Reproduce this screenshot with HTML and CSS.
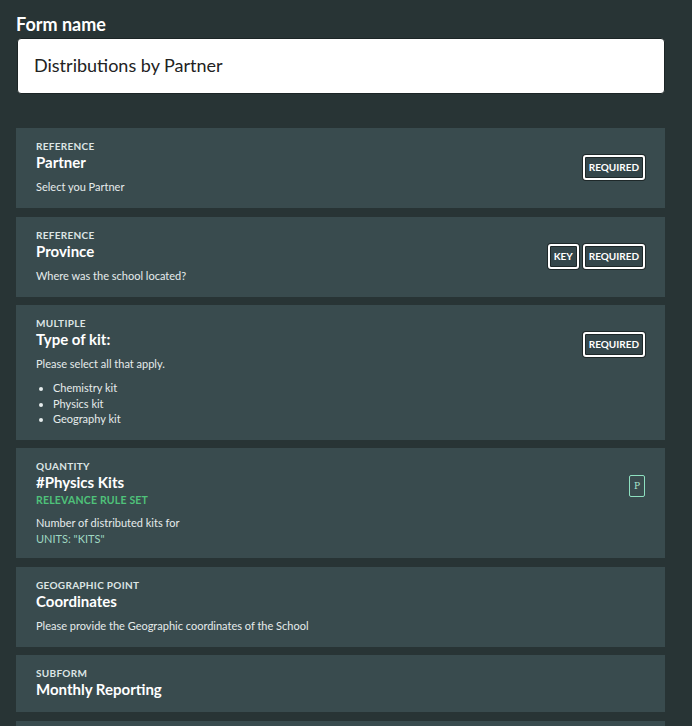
FILE: index.html
```html
<!DOCTYPE html>
<html>
<head>
<meta charset="utf-8">
<link rel="stylesheet" href="styles.css">
</head>
<body>
<div class="page">
  <h2 class="form-label">Form name</h2>
  <div class="name-input">Distributions by Partner</div>

  <div class="fields">
    <div class="card">
      <div class="card-body">
        <div class="type">REFERENCE</div>
        <div class="title">Partner</div>
        <div class="desc">Select you Partner</div>
      </div>
      <div class="badges"><span class="badge">REQUIRED</span></div>
    </div>

    <div class="card">
      <div class="card-body">
        <div class="type">REFERENCE</div>
        <div class="title">Province</div>
        <div class="desc">Where was the school located?</div>
      </div>
      <div class="badges"><span class="badge">KEY</span><span class="badge">REQUIRED</span></div>
    </div>

    <div class="card">
      <div class="card-body">
        <div class="type">MULTIPLE</div>
        <div class="title">Type of kit:</div>
        <div class="desc">Please select all that apply.</div>
        <ul class="options">
          <li>Chemistry kit</li>
          <li>Physics kit</li>
          <li>Geography kit</li>
        </ul>
      </div>
      <div class="badges"><span class="badge">REQUIRED</span></div>
    </div>

    <div class="card card-quantity">
      <div class="card-body">
        <div class="type">QUANTITY</div>
        <div class="title">#Physics Kits</div>
        <div class="relevance">RELEVANCE RULE SET</div>
        <div class="desc">Number of distributed kits for</div>
        <div class="units">UNITS: "KITS"</div>
      </div>
      <div class="badges"><span class="badge badge-p">P</span></div>
    </div>

    <div class="card">
      <div class="card-body">
        <div class="type">GEOGRAPHIC POINT</div>
        <div class="title">Coordinates</div>
        <div class="desc">Please provide the Geographic coordinates of the School</div>
      </div>
    </div>

    <div class="card">
      <div class="card-body">
        <div class="type">SUBFORM</div>
        <div class="title">Monthly Reporting</div>
      </div>
    </div>

    <div class="card card-stub"></div>
  </div>
</div>
</body>
</html>
```

FILE: styles.css
```css
html, body {
  margin: 0;
  padding: 0;
  background: #283435;
  height: 100%;
  overflow: hidden;
}
body {
  font-family: Lato, "Open Sans", sans-serif;
  color: #eef2f2;
}
.page {
  width: 649px;
  padding: 12px 0 0 16px;
}
.form-label {
  margin: 0;
  font-size: 18px;
  line-height: 24px;
  font-weight: 700;
  color: #ffffff;
}
.name-input {
  margin-top: 2px;
  margin-left: 1px;
  width: 614px;
  height: 54px;
  padding: 0 16px;
  background: #ffffff;
  border: 1px solid #1c2526;
  border-radius: 4px;
  color: #222;
  font-size: 18px;
  line-height: 53px;
}
.fields {
  margin-top: 34px;
  display: flex;
  flex-direction: column;
  gap: 8.5px;
}
.card {
  background: #394b4e;
  padding: 12px 20px 13px;
  display: flex;
  justify-content: space-between;
  align-items: flex-start;
}
.card-quantity {
  padding-bottom: 11px;
}
.card-stub {
  height: 40px;
}
.type {
  font-size: 10px;
  line-height: 12px;
  font-weight: 700;
  letter-spacing: 0.3px;
  color: #dde5e5;
}
.title {
  font-size: 15px;
  line-height: 20px;
  font-weight: 700;
  color: #ffffff;
}
.desc {
  margin-top: 7px;
  font-size: 11px;
  line-height: 16px;
  color: #e6ecec;
}
.relevance {
  font-size: 10.5px;
  line-height: 16px;
  font-weight: 700;
  letter-spacing: 0.2px;
  color: #4fc27a;
}
.units {
  font-size: 11px;
  line-height: 16px;
  color: #9fd8c2;
}
.options {
  margin: 8px 0 0;
  padding: 0 0 0 17px;
  font-size: 11px;
  line-height: 15.5px;
  color: #e6ecec;
}
.options li {
  list-style: disc;
}
.badges {
  margin-top: 15px;
  display: flex;
  gap: 4px;
}
.badge {
  display: inline-block;
  height: 21px;
  padding: 0 4px;
  border: 2px solid #ffffff;
  border-radius: 3px;
  box-shadow: 0 0 0 1px #1e2829, inset 0 0 0 1px #1e2829;
  background: #34464a;
  font-size: 10px;
  line-height: 21px;
  font-weight: 700;
  color: #ffffff;
}
.badge-p {
  height: 20px;
  padding: 0 4px;
  border: 1.5px solid #8ee0c0;
  border-radius: 2px;
  box-shadow: none;
  background: transparent;
  font-family: "DejaVu Serif", serif;
  font-weight: 400;
  font-size: 9px;
  line-height: 20px;
  color: #a9e8d0;
}
```
